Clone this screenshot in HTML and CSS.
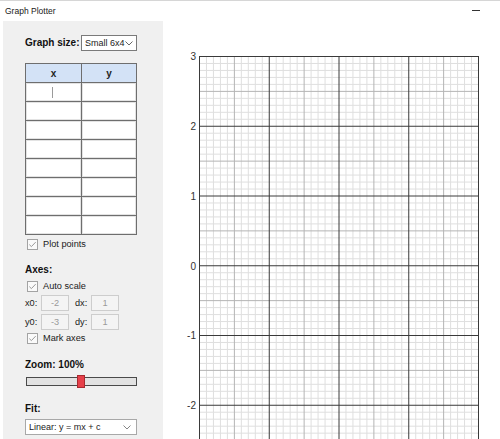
FILE: index.html
```html
<!DOCTYPE html>
<html>
<head>
<meta charset="utf-8">
<link rel="stylesheet" href="styles.css">
</head>
<body>
<div class="window">
  <div class="titlebar">
    <span class="title">Graph Plotter</span>
    <span class="minimize"></span>
  </div>
  <div class="main">
    <div class="panel">
      <div class="row size-row">
        <span class="label">Graph size:</span>
        <div class="select small-select"><span>Small 6x4</span><svg class="chev" width="8" height="5" viewBox="0 0 8 5"><path d="M0.5 0.5 L4 4 L7.5 0.5" fill="none" stroke="#555" stroke-width="0.9"/></svg></div>
      </div>
      <table class="data">
        <thead><tr><th>x</th><th>y</th></tr></thead>
        <tbody>
          <tr><td><span class="caret"></span></td><td></td></tr>
          <tr><td></td><td></td></tr>
          <tr><td></td><td></td></tr>
          <tr><td></td><td></td></tr>
          <tr><td></td><td></td></tr>
          <tr><td></td><td></td></tr>
          <tr><td></td><td></td></tr>
          <tr><td></td><td></td></tr>
        </tbody>
      </table>
      <div class="check plot-points">
        <svg class="cb" width="11" height="11" viewBox="0 0 11 11"><rect x=".5" y=".5" width="10" height="10" fill="#fafafa" stroke="#a3a3a3"/><path d="M2.3 5.6 L4.4 7.6 L8.7 3.1" fill="none" stroke="#8e8e8e" stroke-width="0.9"/></svg>
        <span>Plot points</span>
      </div>
      <div class="label axes-label">Axes:</div>
      <div class="check auto-scale">
        <svg class="cb" width="11" height="11" viewBox="0 0 11 11"><rect x=".5" y=".5" width="10" height="10" fill="#fafafa" stroke="#a3a3a3"/><path d="M2.3 5.6 L4.4 7.6 L8.7 3.1" fill="none" stroke="#8e8e8e" stroke-width="0.9"/></svg>
        <span>Auto scale</span>
      </div>
      <div class="field-row first-field">
        <span class="flabel">x0:</span><span class="num">-2</span>
        <span class="flabel d">dx:</span><span class="num">1</span>
      </div>
      <div class="field-row">
        <span class="flabel">y0:</span><span class="num">-3</span>
        <span class="flabel d">dy:</span><span class="num">1</span>
      </div>
      <div class="check mark-axes">
        <svg class="cb" width="11" height="11" viewBox="0 0 11 11"><rect x=".5" y=".5" width="10" height="10" fill="#fafafa" stroke="#a3a3a3"/><path d="M2.3 5.6 L4.4 7.6 L8.7 3.1" fill="none" stroke="#8e8e8e" stroke-width="0.9"/></svg>
        <span>Mark axes</span>
      </div>
      <div class="label zoom-label">Zoom: 100%</div>
      <div class="slider"><span class="thumb"></span></div>
      <div class="label fit-label">Fit:</div>
      <div class="select fit-select"><span>Linear: y = mx + c</span><svg class="chev" width="8" height="5" viewBox="0 0 8 5"><path d="M0.5 0.5 L4 4 L7.5 0.5" fill="none" stroke="#777" stroke-width="0.9"/></svg></div>
    </div>
    <div class="plot-area">
      <svg class="plot" width="337" height="418" viewBox="0 0 337 418">
        <rect x="36" y="35" width="280" height="383" fill="#ffffff"/>
        <path fill="none" stroke="#dfdfdf" stroke-width="1" d="M43.475 35V418M50.45 35V418M57.425 35V418M64.4 35V418M78.35 35V418M85.325 35V418M92.3 35V418M99.275 35V418M113.225 35V418M120.2 35V418M127.175 35V418M134.15 35V418M148.1 35V418M155.075 35V418M162.05 35V418M169.025 35V418M182.975 35V418M189.95 35V418M196.925 35V418M203.9 35V418M217.85 35V418M224.825 35V418M231.8 35V418M238.775 35V418M252.725 35V418M259.7 35V418M266.675 35V418M273.65 35V418M287.6 35V418M294.575 35V418M301.55 35V418M308.525 35V418
        M36 42.475H316M36 49.45H316M36 56.425H316M36 63.4H316M36 77.35H316M36 84.325H316M36 91.3H316M36 98.275H316M36 112.225H316M36 119.2H316M36 126.175H316M36 133.15H316M36 147.1H316M36 154.075H316M36 161.05H316M36 168.025H316M36 181.975H316M36 188.95H316M36 195.925H316M36 202.9H316M36 216.85H316M36 223.825H316M36 230.8H316M36 237.775H316M36 251.725H316M36 258.7H316M36 265.675H316M36 272.65H316M36 286.6H316M36 293.575H316M36 300.55H316M36 307.525H316M36 321.475H316M36 328.45H316M36 335.425H316M36 342.4H316M36 356.35H316M36 363.325H316M36 370.3H316M36 377.275H316M36 391.225H316M36 398.2H316M36 405.175H316M36 412.15H316"/>
        <path fill="none" stroke="#b4b4b4" stroke-width="1" d="M71.375 35V418M141.125 35V418M210.875 35V418M280.625 35V418M36 70.375H316M36 140.125H316M36 209.875H316M36 279.625H316M36 349.375H316"/>
        <path fill="none" stroke="#3a3a3a" stroke-width="1" d="M36.5 35V418M106.25 35V418M176 35V418M245.75 35V418M315.5 35V418M36 35.5H316M36 105.25H316M36 175H316M36 244.75H316M36 314.5H316M36 384.25H316"/>
        <g class="ticks">
          <text x="33" y="39">3</text>
          <text x="33" y="109">2</text>
          <text x="33" y="178.5">1</text>
          <text x="33" y="248.5">0</text>
          <text x="33" y="318">-1</text>
          <text x="33" y="388">-2</text>
        </g>
      </svg>
    </div>
  </div>
</div>
</body>
</html>
```
FILE: styles.css
```css
* { box-sizing: border-box; }
html, body { margin: 0; padding: 0; background: #ffffff; }
body { font-family: "Liberation Sans", Arial, sans-serif; color: #1a1a1a; }

.window { width: 500px; height: 439px; overflow: hidden; background: #ffffff; }

.titlebar {
  height: 21px;
  border-top: 1px solid #d6d6d6;
  display: flex;
  align-items: center;
  justify-content: space-between;
  padding: 0 20px 0 5px;
}
.title { font-size: 8.5px; color: #202020; }
.minimize { width: 8px; height: 1px; background: #333; margin-top: -1px; }

.main { display: flex; height: 418px; }

.panel {
  flex: none;
  width: 160px;
  margin-left: 3px;
  background: #f0f0f0;
  padding: 14px 0 0 22px;
  display: flex;
  flex-direction: column;
  align-items: flex-start;
}

.label { font-size: 10px; font-weight: bold; line-height: 12px; color: #111; }

.row { display: flex; align-items: center; }
.size-row { height: 16px; }
.size-row .label { width: 56px; flex: none; }

.select {
  display: flex;
  align-items: center;
  justify-content: space-between;
  background: #ffffff;
  font-size: 9px;
  color: #222;
  height: 16px;
  flex: none;
}
.small-select { width: 56px; border: 1px solid #7a7a7a; padding: 0 3px 0 3px; }
.fit-select { width: 112px; border: 1px solid #a8a8a8; padding: 0 5px 0 3px; margin-top: 4px; }
.chev { display: block; flex: none; }

.data {
  margin-top: 12px;
  border-collapse: collapse;
  width: 112px;
  table-layout: fixed;
}
.data th, .data td {
  border: 1px solid #6e6e6e;
  height: 19px;
  padding: 0;
}
.data th {
  background: #d3e2f6;
  font-size: 10px;
  font-weight: bold;
  color: #222;
}
.data td { background: #ffffff; box-shadow: inset 0 0 0 1px #e3e3e3; position: relative; }
.data th:first-child, .data td:first-child { width: 56px; }
.caret {
  position: absolute;
  left: 26px;
  top: 4px;
  width: 1px;
  height: 11px;
  background: #9a9a9a;
}

.check { display: flex; align-items: center; height: 12px; font-size: 9.2px; color: #1a1a1a; padding-left: 2px; }
.check .cb { display: block; margin-right: 5px; flex: none; }
.plot-points { margin-top: 3px; }
.axes-label { margin-top: 14px; }
.auto-scale { margin-top: 4px; }
.mark-axes { margin-top: 2px; }

.field-row { display: flex; align-items: center; height: 17px; margin-top: 2px; font-size: 9.2px; }
.first-field { margin-top: 2px; }
.flabel { flex: none; width: 16px; color: #1a1a1a; }
.flabel.d { width: 16px; margin-left: 6px; }
.num {
  flex: none;
  width: 28px;
  height: 16px;
  border: 1px solid #cdcdcd;
  background: #f4f4f4;
  color: #9a9a9a;
  display: flex;
  align-items: center;
  justify-content: center;
}

.zoom-label { margin-top: 15px; }
.slider {
  flex: none;
  margin-top: 6px;
  margin-left: 1px;
  width: 111px;
  height: 9px;
  border: 1px solid #4a4a4a;
  background: #e2e2e2;
  position: relative;
}
.thumb {
  position: absolute;
  left: 50px;
  top: -3px;
  width: 8px;
  height: 13px;
  background: #e6404a;
  border: 1px solid #a82a30;
}
.fit-label { margin-top: 17px; }

.plot-area { flex: 1; }
.plot { display: block; }
.ticks text { font-family: "Liberation Sans", Arial, sans-serif; font-size: 10px; fill: #333; text-anchor: end; }
```
